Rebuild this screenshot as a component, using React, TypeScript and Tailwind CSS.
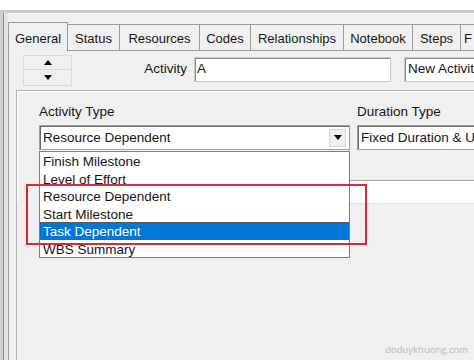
import React from "react";

const tabs = [
  { label: "Status", w: "w-[52px]" },
  { label: "Resources", w: "w-[80px]" },
  { label: "Codes", w: "w-[51px]" },
  { label: "Relationships", w: "w-[93px]" },
  { label: "Notebook", w: "w-[69px]" },
  { label: "Steps", w: "w-[48px]" },
  { label: "F", w: "w-[40px]" },
];

const activityTypes = [
  "Finish Milestone",
  "Level of Effort",
  "Resource Dependent",
  "Start Milestone",
  "Task Dependent",
  "WBS Summary",
];

function Arrow({ up }: { up?: boolean }) {
  return (
    <svg width="8" height="5" viewBox="0 0 8 5">
      <path d={up ? "M0 5 L4 0 L8 5 Z" : "M0 0 L8 0 L4 5 Z"} fill="#000" />
    </svg>
  );
}

function Combo({ value, withButton }: { value: string; withButton?: boolean }) {
  return (
    <div className="flex h-[25px] items-center overflow-hidden border border-[#a0a0a0] bg-white shadow-[inset_1px_1px_0_#6a6a6a]">
      <span className="flex-1 overflow-hidden whitespace-nowrap pl-[3px] pt-[1px]">{value}</span>
      {withButton && (
        <div className="mr-[3px] flex h-[18px] w-[17px] shrink-0 items-center justify-center border border-[#d8d8d8] bg-[#f0f0f0]">
          <Arrow />
        </div>
      )}
    </div>
  );
}

export default function App() {
  return (
    <div className="relative h-[360px] w-[474px] overflow-hidden bg-[#f0f0f0] font-['Liberation_Sans',Arial,sans-serif] text-[13.5px] text-[#151515]">
      {/* window top */}
      <div className="h-[10px] bg-white" />
      <div className="h-[3px] bg-[#c8c8c8]" />

      <div className="flex h-[347px]">
        {/* outer frame edge */}
        <div className="w-[3px] shrink-0 bg-[#d0d0d0]" />
        <div className="w-px shrink-0 bg-[#8a8a8a]" />
        <div className="w-[4px] shrink-0 bg-[#e4e4e4]" />

        <div className="flex min-w-0 flex-1 flex-col pt-[9px]">
          {/* tab strip */}
          <div className="flex h-[28px] items-end whitespace-nowrap text-[13px]">
            <div className="relative z-10 -mb-px flex h-[29px] w-[60px] shrink-0 items-center justify-center border-l border-r border-t border-[#9a9a9a] bg-[#f0f0f0] pt-[3px]">
              General
            </div>
            {tabs.map((t) => (
              <div
                key={t.label}
                className={`flex h-[26px] shrink-0 items-center border-r border-t border-[#9a9a9a] bg-[#f0f0f0] pt-[2px] ${t.w} ${t.label === "F" ? "justify-start pl-[3px]" : "justify-center"}`}
              >
                {t.label}
              </div>
            ))}
          </div>

          {/* tab panel */}
          <div className="flex-1 border-l border-t border-[#9a9a9a]">
            {/* activity row */}
            <div className="flex h-[39px] items-start">
              <div className="ml-[14px] mt-[4px] flex w-[49px] shrink-0 flex-col">
                <div className="flex h-[15px] items-center justify-center border border-[#dadada] bg-[#f0f0f0]">
                  <Arrow up />
                </div>
                <div className="flex h-[16px] items-center justify-center border border-t-0 border-[#dadada] bg-[#f0f0f0]">
                  <Arrow />
                </div>
              </div>
              <div className="mt-[6px] flex h-[25px] w-[115px] shrink-0 items-center justify-end">Activity</div>
              <div className="ml-[7px] mt-[6px] flex h-[25px] w-[197px] shrink-0 items-center border border-[#c8c8c8] bg-white pl-[2px] shadow-[inset_1px_1px_0_#8a8a8a]">
                A
              </div>
              <div className="ml-[13px] mt-[6px] flex h-[25px] w-[90px] shrink-0 items-center overflow-hidden whitespace-nowrap border border-[#c8c8c8] bg-white pl-[3px] shadow-[inset_1px_1px_0_#8a8a8a]">
                New Activity
              </div>
            </div>

            {/* group box */}
            <div className="ml-[7px] h-full border-l border-t border-[#b4b4b4]">
              <div className="flex border-l border-t border-white pt-[11px]">
                <div className="relative ml-[21px] w-[311px] shrink-0">
                  <div className="h-[16px] pt-px leading-[16px]">Activity Type</div>
                  <div className="mt-[6px]">
                    <Combo value="Resource Dependent" withButton />
                  </div>
                  {/* open list */}
                  <div className="absolute left-0 top-[48px] z-20 h-[107px] w-[311px] border border-[#7e7e7e] bg-white">
                    {activityTypes.map((a) => (
                      <div
                        key={a}
                        className={`h-[17.6px] whitespace-nowrap pl-[3px] leading-[17.6px] ${
                          a === "Task Dependent"
                            ? "bg-[#0078d7] text-white outline-1 outline-dotted outline-offset-[-1px] outline-[#555]"
                            : ""
                        }`}
                      >
                        <span className="relative top-[1px]">{a}</span>
                      </div>
                    ))}
                  </div>
                </div>
                <div className="ml-[7px] flex min-w-0 flex-1 flex-col">
                  <div className="h-[16px] whitespace-nowrap pt-px leading-[16px]">Duration Type</div>
                  <div className="mt-[6px] w-[160px]">
                    <Combo value="Fixed Duration & Units" />
                  </div>
                  <div className="-ml-[20px] mt-[30px] h-[24px] w-[160px] border-b border-t border-b-[#e2e2e2] border-t-[#a0a0a0] bg-white" />
                </div>
              </div>
            </div>
          </div>
        </div>
      </div>

      {/* annotation */}
      <div className="absolute left-[26px] top-[184px] z-30 h-[61px] w-[341px] border-2 border-[#e0262e]" />

      <div className="absolute bottom-[3px] right-[6px] font-['Open_Sans',sans-serif] text-[9.5px] text-[#b8b8b8]">
        doduykhuong.com
      </div>
    </div>
  );
}
